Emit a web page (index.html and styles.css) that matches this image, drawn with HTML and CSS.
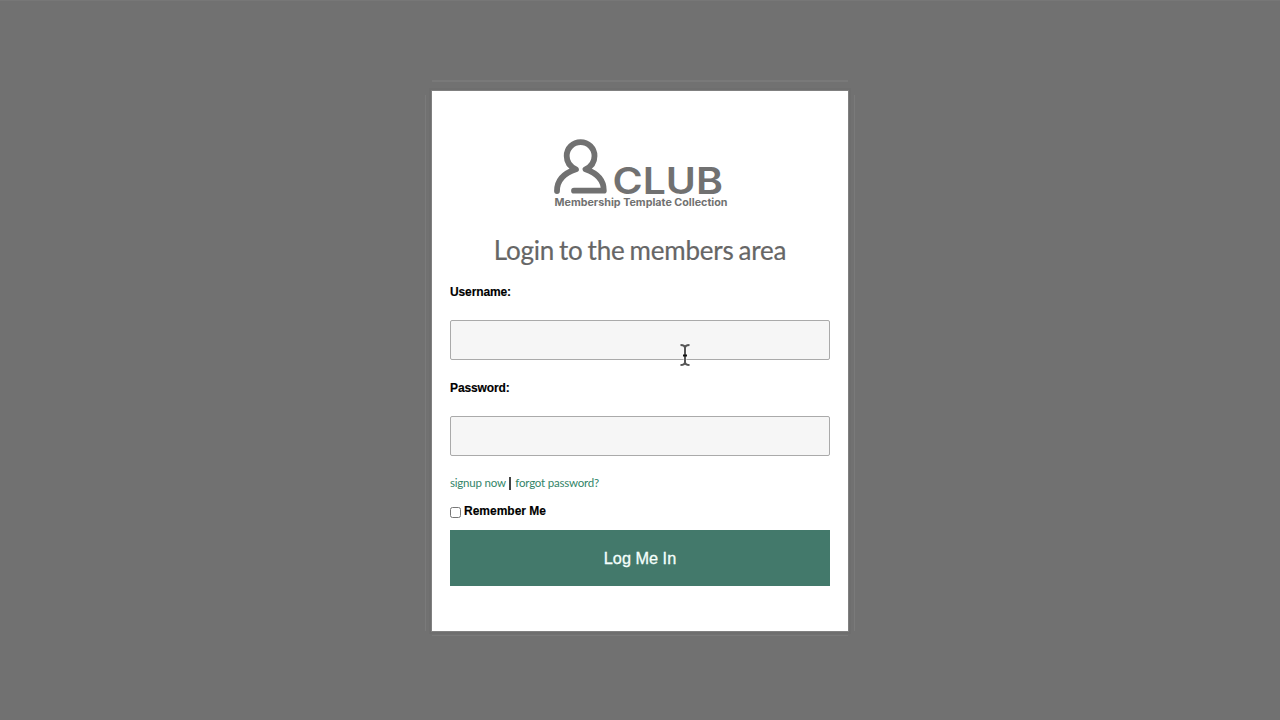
FILE: index.html
```html
<!DOCTYPE html>
<html lang="en">
<head>
<meta charset="utf-8">
<title>Login to the members area</title>
<link rel="stylesheet" href="styles.css">
</head>
<body>
<main class="page">
  <form class="card">
    <svg class="logo" width="180" height="76" viewBox="550 136 180 76" role="img" aria-label="Club">
      <path class="logo-mark" d="M557 191C557 181 563 173.500 576 169.300C569.500 166.500 566.700 161.500 566.700 156A13.900 13.900 0 0 1 594.500 156C594.500 161.500 591.700 166.500 585.500 169.300C598 173.500 603.800 180.500 603.800 190.700H574"/>
      <text class="logo-name" x="612.5" y="193.500" textLength="110.500" lengthAdjust="spacingAndGlyphs">CLUB</text>
      <text class="logo-tag" x="554.500" y="206" textLength="173" lengthAdjust="spacingAndGlyphs">Membership Template Collection</text>
    </svg>
    <h1 class="title">Login to the members area</h1>
    <label class="label" for="user">Username:</label>
    <input class="field" id="user" type="text">
    <label class="label" for="pass">Password:</label>
    <input class="field" id="pass" type="password">
    <div class="links"><a class="link">signup now</a><span class="divider"></span><a class="link">forgot password?</a></div>
    <label class="remember"><input class="check" type="checkbox"><span class="remember-text">Remember Me</span></label>
    <button class="submit" type="button">Log Me In</button>
  </form>
  <svg class="cursor" width="12" height="24" viewBox="0 0 12 24">
    <path class="cursor-halo" d="M1.500 2C4 2 6 3 6 5V19C6 21 4 22 1.500 22M10.500 2C8 2 6 3 6 5M6 19C6 21 8 22 10.500 22"/>
    <path class="cursor-line" d="M1.500 2C4 2 6 3 6 5V19C6 21 4 22 1.500 22M10.500 2C8 2 6 3 6 5M6 19C6 21 8 22 10.500 22"/>
    <path class="cursor-bar" d="M4 12.500H8"/>
  </svg>
</main>
</body>
</html>
```
FILE: styles.css
```css
* { box-sizing: border-box; }
body { margin: 0; background: #717171; font-family: "Liberation Sans", Arial, sans-serif; }
.page { height: 720px; overflow: hidden; padding-top: 91px; position: relative; background: linear-gradient(#777 0 1px, transparent 1px); }
.card {
  position: relative; width: 416px; height: 540px; margin: 0 auto; padding: 45px 18px;
  background: #fff; display: flex; flex-direction: column; align-items: stretch;
  box-shadow: 0 0 0 1px #808080, 0 0 0 3px #6e6e6e;
}
.card::before { content: ""; position: absolute; left: 0; right: 0; top: -11px; bottom: -5px; border-top: 2px solid #797979; border-bottom: 1px solid #7a7a7a; pointer-events: none; }
.card::after { content: ""; position: absolute; left: -7px; right: -7px; top: 4px; bottom: 0; border-left: 1px solid #7a7a7a; border-right: 1px solid #7a7a7a; pointer-events: none; }
.logo { align-self: center; flex: none; }
.logo-mark { fill: none; stroke: #717171; stroke-width: 5.800; stroke-linecap: round; stroke-linejoin: round; }
.logo-name { font: 600 37px Inter, sans-serif; fill: #717171; }
.logo-tag { font: 700 10px Inter, sans-serif; fill: #717171; }
.title { margin: 20px 0 0; font: 400 26px/36px Lato, sans-serif; height: 36px; letter-spacing: -.2px; word-spacing: -1.500px; color: #666; text-align: center; white-space: nowrap; -webkit-text-stroke: .2px #666; }
.label { height: 16px; margin-top: 16px; font-size: 12px; line-height: 16px; font-weight: 700; letter-spacing: -.12px; color: #000; -webkit-text-stroke: .15px #000; }
.field { width: 380px; height: 40px; margin: 20px 0 4px; border: 1px solid #aaa; border-radius: 2px; background: #f6f6f6; }
.links { display: flex; align-items: center; height: 16px; margin-top: 15px; }
.link { font: 400 11.500px/16px Lato, sans-serif; letter-spacing: -.2px; color: #328468; white-space: nowrap; }
.divider { width: 2px; height: 13px; margin: 0 4px 0 3.500px; background: #444; }
.remember { display: flex; align-items: center; height: 16px; margin-top: 12px; font-size: 12px; font-weight: 700; color: #000; -webkit-text-stroke: .15px #000; }
.remember-text { line-height: 16px; }
.check { appearance: none; width: 11px; height: 11px; margin: 2px 3px 0 0; border: 1px solid #777; border-radius: 2.500px; background: #fff; }
.submit { height: 56px; margin-top: 11px; border: 0; padding: 0; background: #43796b; color: #f4fffc; font: 400 16.300px "Liberation Sans", Arial, sans-serif; -webkit-text-stroke: .3px #f4fffc; }
.cursor { position: absolute; left: 679px; top: 343px; }
.cursor path { fill: none; }
.cursor-halo { stroke: #fff; stroke-width: 3; opacity: .6; }
.cursor-line { stroke: #555; stroke-width: 2; }
.cursor-bar { stroke: #111; stroke-width: 2; }
```
